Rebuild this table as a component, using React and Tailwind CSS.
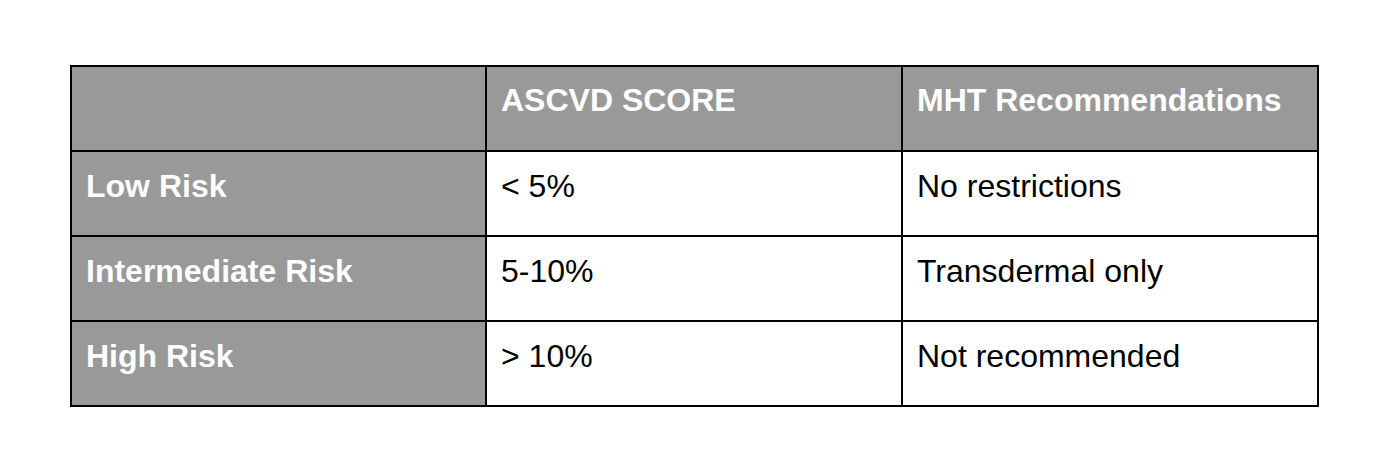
const HEAD = ['', 'ASCVD SCORE', 'MHT Recommendations'];

const ROWS = [
  ['Low Risk', '< 5%', 'No restrictions'],
  ['Intermediate Risk', '5-10%', 'Transdermal only'],
  ['High Risk', '> 10%', 'Not recommended'],
];

export default function App() {
  return (
    <div
      className="w-[1400px] h-[462px] bg-white pt-[65px] pl-[70px]"
      style={{ fontFamily: '"Liberation Sans", Arial, sans-serif' }}
    >
      <div className="w-[1249px] border-2 border-black bg-black grid grid-cols-[413px_414px_414px] grid-rows-[83px_83px_83px_83px] gap-[2px] text-[32px] leading-[37px]">
        {/* header row */}
        {HEAD.map((h, i) => (
          <div key={i} className="bg-[#999999] text-white font-bold pl-[14px] pt-[15px]">
            {h}
          </div>
        ))}

        {/* body rows: first col grey, rest white */}
        {ROWS.map((row) =>
          row.map((cell, j) => (
            <div
              key={row[0] + j}
              className={
                j === 0
                  ? 'bg-[#999999] text-white font-bold pl-[14px] pt-[16px]'
                  : 'bg-white text-black pl-[14px] pt-[16px]'
              }
            >
              {cell}
            </div>
          ))
        )}
      </div>
    </div>
  );
}
